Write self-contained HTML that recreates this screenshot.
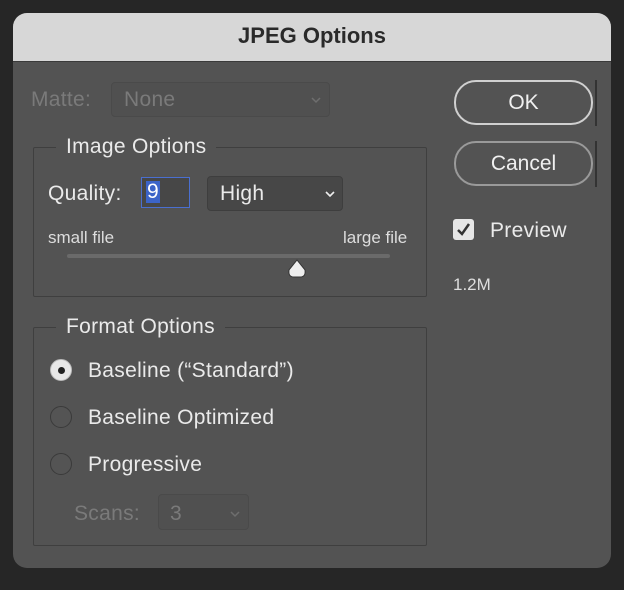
<!DOCTYPE html>
<html><head><style>
body{margin:0;width:624px;height:590px;background:#262626;font-family:"Liberation Sans",sans-serif;position:relative;overflow:hidden}
.dlg{position:absolute;left:13px;top:13px;width:598px;height:555px;background:#535353;border-radius:14px;overflow:hidden}
.title{position:absolute;left:0;top:0;width:598px;height:48px;background:#d7d7d7;border-bottom:1px solid #3a3a3a;text-align:center;line-height:46px;font-size:22px;font-weight:bold;color:#2a2a2a}
.a{position:absolute;white-space:nowrap}
.t{color:#eaeaea;font-size:21px;letter-spacing:0.3px}
.dd{position:absolute;border:1px solid #3e3e3e;border-radius:4px;background:#4c4c4c}
.btn{position:absolute;border:2px solid #d0d0d0;border-radius:22px;color:#f0f0f0;font-size:21px;text-align:center}
.grp{position:absolute;border:1px solid #3f3f3f;border-radius:2px}
.radio{position:absolute;width:20px;height:20px;border-radius:50%;border:1.5px solid #3a3a3a;background:#545454}
</style></head><body>
<div class="dlg">
<div class="title">JPEG Options</div>
</div>
<div class="a t" style="left:31px;top:88px;color:#7a7a7a">Matte:</div>
<div class="dd" style="left:111px;top:82px;width:217px;height:33px;border-color:#4a4a4a;background:#505050"></div>
<div class="a t" style="left:124px;top:88px;color:#7a7a7a">None</div>
<svg class="a" style="left:310px;top:96px" width="12" height="8"><path d="M2 2 L6 6 L10 2" fill="none" stroke="#6e6e6e" stroke-width="1.5"/></svg>
<div class="btn" style="left:454px;top:80px;width:135px;height:41px;line-height:41px">OK</div>
<div class="btn" style="left:454px;top:141px;width:135px;height:41px;line-height:41px;border-color:#9a9a9a">Cancel</div>
<div class="a" style="left:595px;top:80px;width:2px;height:46px;background:#333"></div>
<div class="a" style="left:595px;top:141px;width:2px;height:46px;background:#333"></div>

<div class="grp" style="left:33px;top:147px;width:392px;height:148px"></div>
<div class="a t" style="left:56px;top:135px;background:#535353;padding:0 10px">Image Options</div>
<div class="a t" style="left:48px;top:182px">Quality:</div>
<div class="a" style="left:141px;top:177px;width:47px;height:29px;border:1.5px solid #4a6fd0;background:#474747"></div>
<div class="a" style="left:146px;top:181px;background:#3c64c8;color:#fff;font-size:21px;line-height:22px;padding:0 1px">9</div>
<div class="dd" style="left:207px;top:176px;width:134px;height:33px;background:#474747"></div>
<div class="a t" style="left:220px;top:182px">High</div>
<svg class="a" style="left:324px;top:190px" width="12" height="8"><path d="M2 2 L6 6 L10 2" fill="none" stroke="#eee" stroke-width="1.6"/></svg>
<div class="a" style="left:48px;top:228px;color:#ddd;font-size:17px">small file</div>
<div class="a" style="left:343px;top:228px;color:#ddd;font-size:17px">large file</div>
<div class="a" style="left:67px;top:254px;width:323px;height:4px;background:#6a6a6a;border-radius:2px"></div>
<svg class="a" style="left:286px;top:259px" width="22" height="20"><path d="M11 1 L19 11 Q20 18 14 18 L8 18 Q2 18 3 11 Z" fill="#eee" stroke="#333" stroke-width="1"/></svg>

<div class="a" style="left:453px;top:219px;width:21px;height:21px;background:#e6e6e6;border-radius:3px"></div>
<svg class="a" style="left:453px;top:219px" width="21" height="21"><path d="M5 11 L9 15 L16 5" fill="none" stroke="#333" stroke-width="2.5"/></svg>
<div class="a t" style="left:490px;top:219px">Preview</div>
<div class="a" style="left:453px;top:275px;color:#ddd;font-size:17px">1.2M</div>

<div class="grp" style="left:33px;top:327px;width:392px;height:217px"></div>
<div class="a t" style="left:56px;top:315px;background:#535353;padding:0 10px">Format Options</div>
<div class="radio" style="left:50px;top:359px;background:#e8e8e8;border-color:#bbb"></div>
<div class="a" style="left:58px;top:367px;width:7px;height:7px;border-radius:50%;background:#222"></div>
<div class="a t" style="left:88px;top:359px">Baseline (“Standard”)</div>
<div class="radio" style="left:50px;top:406px"></div>
<div class="a t" style="left:88px;top:406px">Baseline Optimized</div>
<div class="radio" style="left:50px;top:453px"></div>
<div class="a t" style="left:88px;top:453px">Progressive</div>
<div class="a t" style="left:74px;top:502px;color:#7a7a7a">Scans:</div>
<div class="dd" style="left:158px;top:494px;width:89px;height:34px;border-color:#4a4a4a;background:#505050"></div>
<div class="a t" style="left:170px;top:502px;color:#7a7a7a">3</div>
<svg class="a" style="left:229px;top:510px" width="12" height="8"><path d="M2 2 L6 6 L10 2" fill="none" stroke="#6e6e6e" stroke-width="1.5"/></svg>
</body></html>
